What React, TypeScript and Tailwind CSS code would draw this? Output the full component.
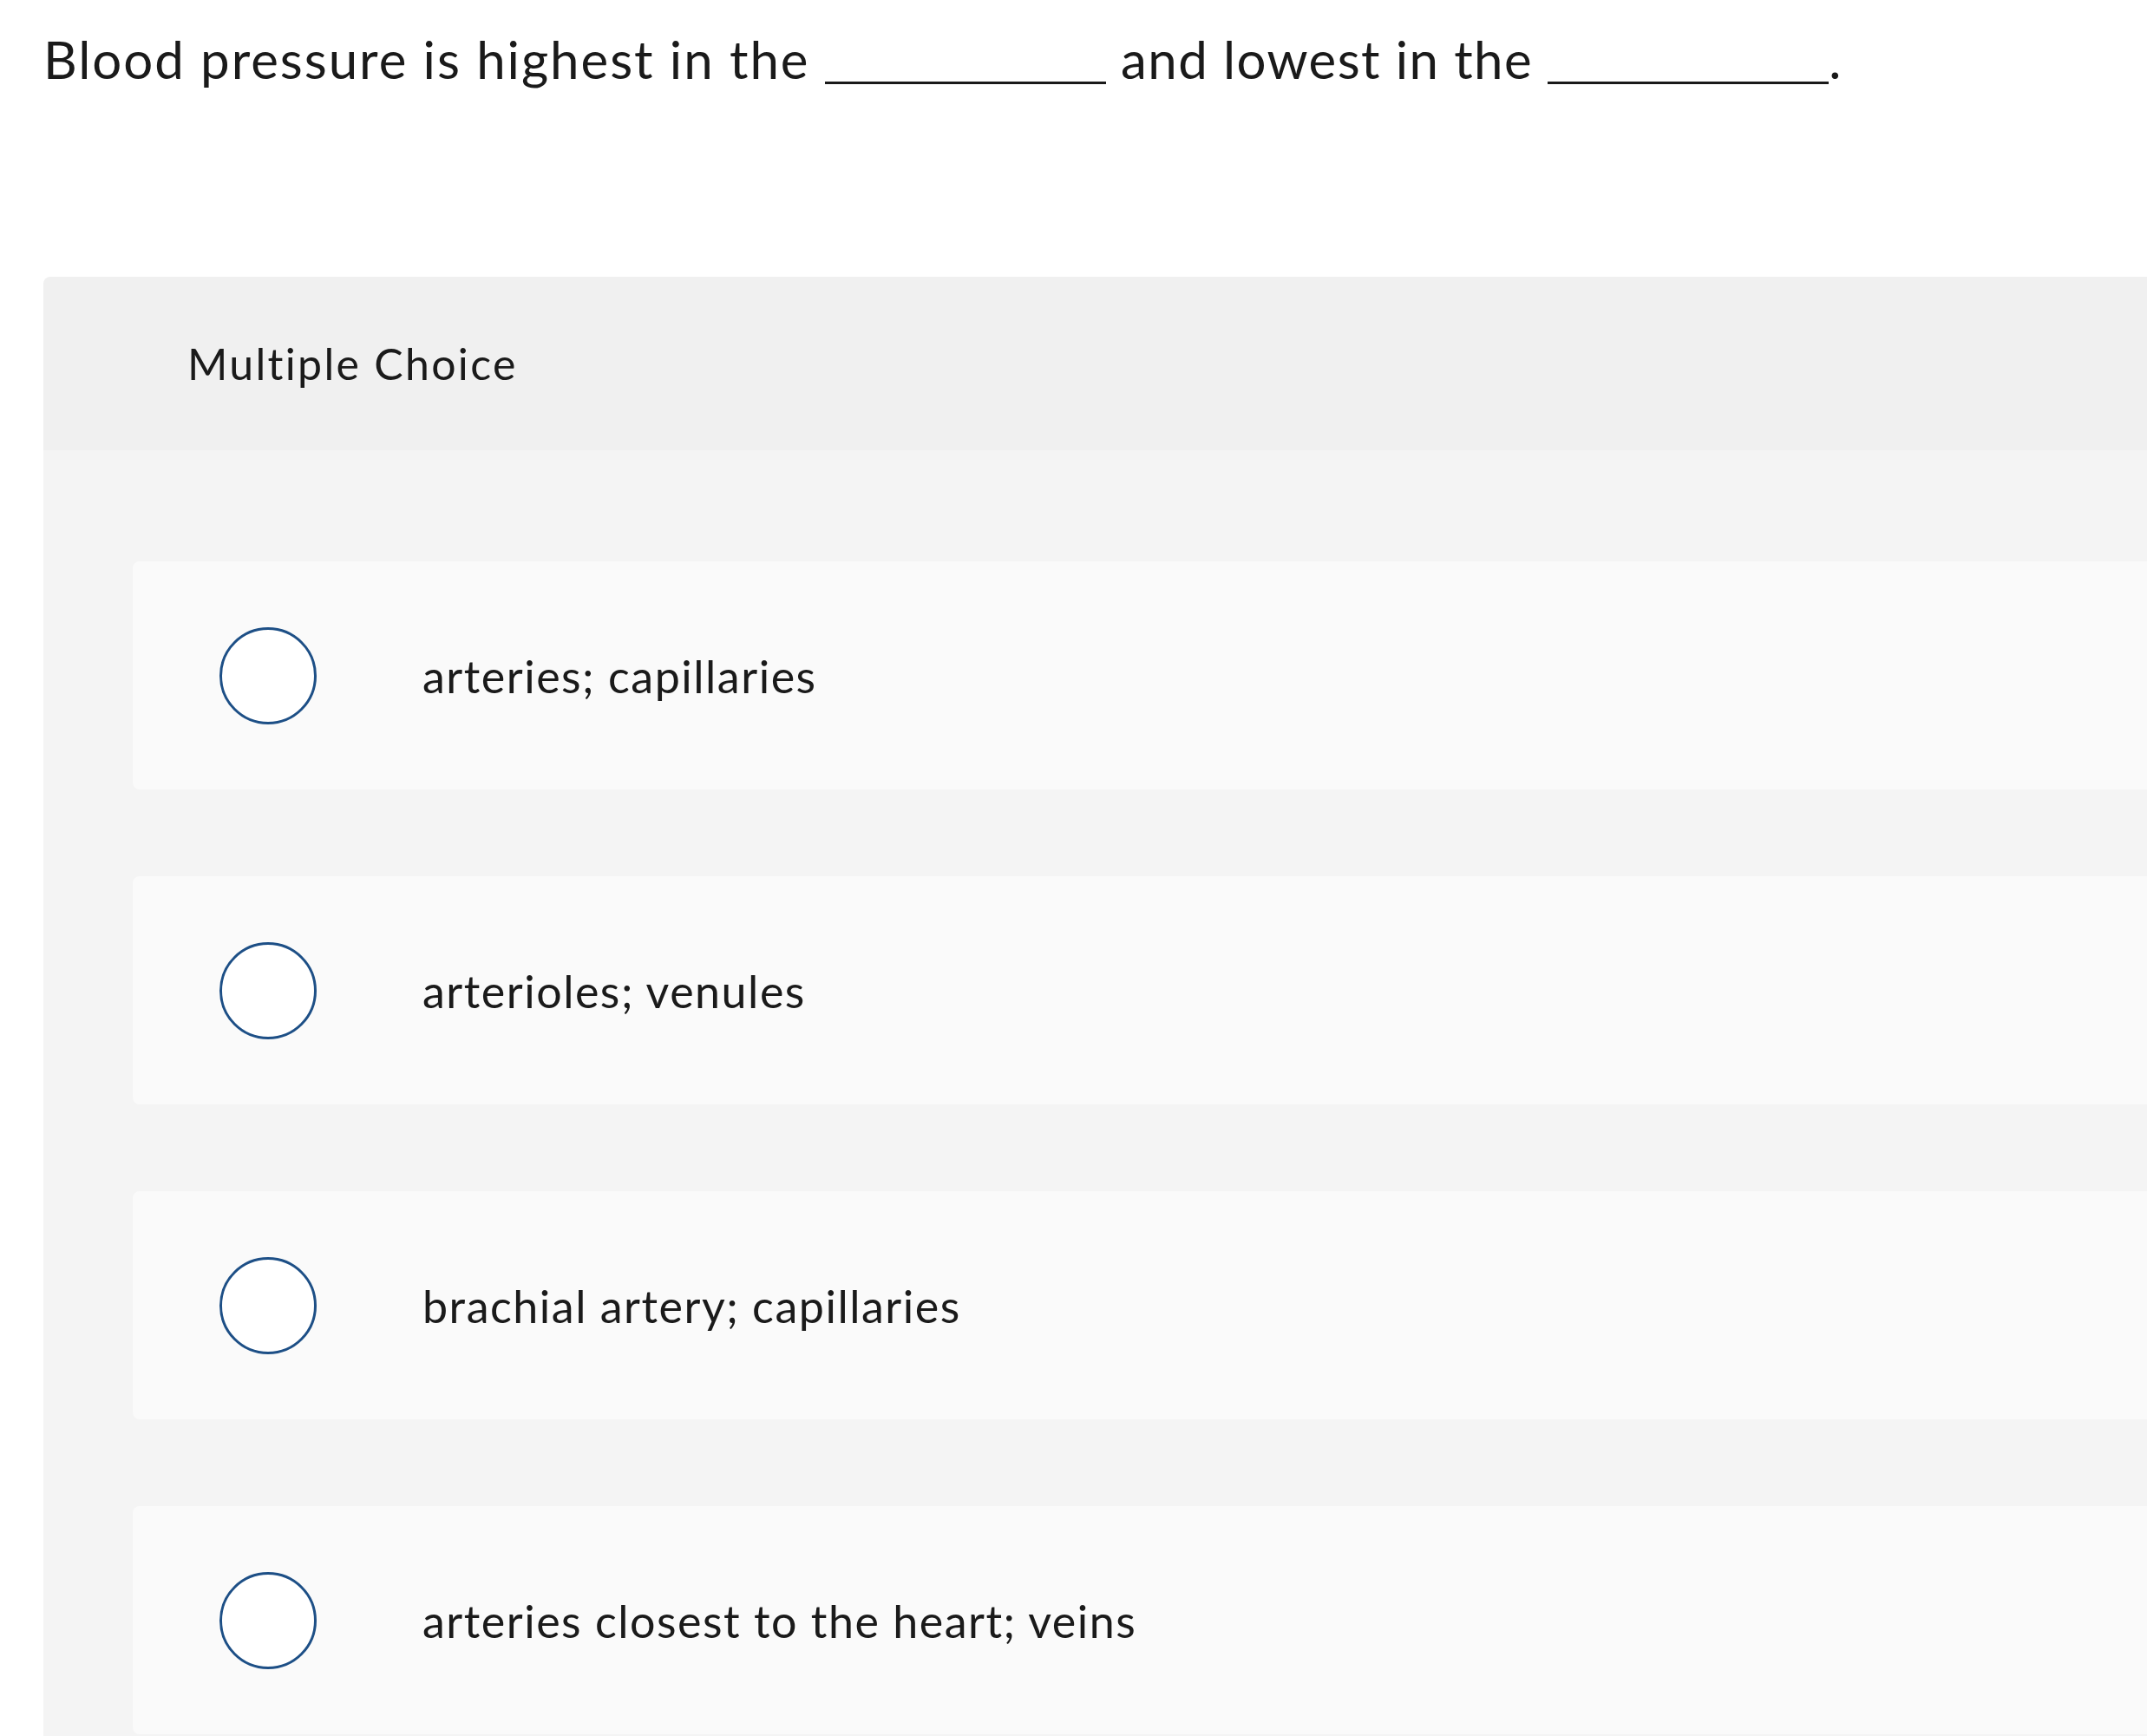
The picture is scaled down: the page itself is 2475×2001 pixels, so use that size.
import React from "react";

const options = [
  "arteries; capillaries",
  "arterioles; venules",
  "brachial artery; capillaries",
  "arteries closest to the heart; veins",
];

function Blank() {
  return (
    <span className="inline-block h-0 w-[324px] border-b-[3px] border-[#1a1a1a] mb-[-6px] align-baseline" />
  );
}

export default function App() {
  return (
    <div
      className="w-full min-h-screen overflow-hidden bg-white text-[#1a1a1a]"
      style={{ fontFamily: "Lato, 'Open Sans', sans-serif" }}
    >
      <p className="pl-[50px] pt-[32px] text-[60px] leading-[72px] tracking-[1.95px] whitespace-nowrap">
        Blood pressure is highest in the <Blank />{" "}
        <span className="tracking-[1.4px]">and lowest in the</span> <Blank />.
      </p>

      <div className="ml-[50px] mt-[215px] w-[2500px] rounded-t-[8px] overflow-hidden">
        <div className="flex h-[200px] items-center bg-[#f0f0f0] pl-[166px] text-[50px] tracking-[2.3px]">
          Multiple Choice
        </div>
        <div className="flex flex-col gap-[100px] bg-[#f4f4f4] pl-[103px] pt-[128px] pb-[100px]">
          {options.map((o) => (
            <div
              key={o}
              className="flex h-[263px] items-center rounded-[8px] bg-[#fafafa] pl-[100px]"
            >
              <span className="h-[112px] w-[112px] shrink-0 rounded-full border-[3.5px] border-[#1d4f86] bg-white" />
              <span className="ml-[122px] text-[52px] tracking-[1.5px] whitespace-nowrap">{o}</span>
            </div>
          ))}
        </div>
      </div>
    </div>
  );
}
